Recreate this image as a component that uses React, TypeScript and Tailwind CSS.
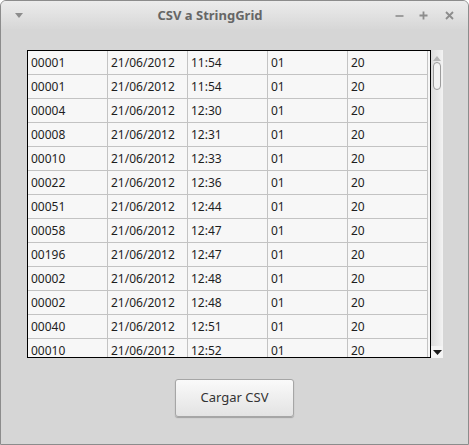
const rows: string[][] = [
  ["00001", "21/06/2012", "11:54", "01", "20"],
  ["00001", "21/06/2012", "11:54", "01", "20"],
  ["00004", "21/06/2012", "12:30", "01", "20"],
  ["00008", "21/06/2012", "12:31", "01", "20"],
  ["00010", "21/06/2012", "12:33", "01", "20"],
  ["00022", "21/06/2012", "12:36", "01", "20"],
  ["00051", "21/06/2012", "12:44", "01", "20"],
  ["00058", "21/06/2012", "12:47", "01", "20"],
  ["00196", "21/06/2012", "12:47", "01", "20"],
  ["00002", "21/06/2012", "12:48", "01", "20"],
  ["00002", "21/06/2012", "12:48", "01", "20"],
  ["00040", "21/06/2012", "12:51", "01", "20"],
  ["00010", "21/06/2012", "12:52", "01", "20"],
];

function TitleBar() {
  return (
    <div className="flex h-[28px] items-center bg-gradient-to-b from-[#ececec] to-[#d7d7d7] rounded-t-[5px]">
      <div className="flex w-[35px] items-center justify-center pl-[1px]">
        <svg width="8" height="5" viewBox="0 0 8 5">
          <path d="M0 0 H8 L4 5 Z" fill="#8c8c8c" />
        </svg>
      </div>
      <div className="flex-1 text-center text-[13px] font-bold text-[#666666] leading-none">
        CSV a StringGrid
      </div>
      <div className="flex w-[84px] items-center pl-[11px]">
        <svg width="9" height="9" viewBox="0 0 9 9">
          <path d="M0.5 5 H8.5" stroke="#8c8c8c" strokeWidth="1.6" />
        </svg>
        <svg className="ml-[15px]" width="9" height="9" viewBox="0 0 9 9">
          <path d="M0.5 4.5 H8.5 M4.5 0.5 V8.5" stroke="#8c8c8c" strokeWidth="1.8" />
        </svg>
        <svg className="ml-[17px]" width="9" height="9" viewBox="0 0 9 9">
          <path d="M1 1 L8 8 M8 1 L1 8" stroke="#8c8c8c" strokeWidth="1.8" />
        </svg>
      </div>
    </div>
  );
}

function Scrollbar() {
  return (
    <div className="flex w-[12px] flex-col bg-gradient-to-r from-[#dcdcdc] to-[#f3f3f3]">
      <div className="flex h-[11px] items-end justify-center">
        <svg width="8" height="5" viewBox="0 0 8 5">
          <path d="M0 5 H8 L4 0 Z" fill="#b4b4b4" />
        </svg>
      </div>
      <div className="mt-[1px] ml-[2px] h-[28px] w-[8px] rounded-full border border-[#9c9c9c] bg-[#f2f2f2]" />
      <div className="flex-1" />
      <div className="flex h-[12px] items-center justify-center bg-[#f4f4f4]">
        <svg width="9" height="5" viewBox="0 0 9 5">
          <path d="M0 0 H9 L4.5 5 Z" fill="#1a1a1a" />
        </svg>
      </div>
    </div>
  );
}

function StringGrid() {
  return (
    <div className="flex h-[308px] ml-[26px]">
      <div className="h-full w-[404px] overflow-hidden border border-black bg-[#f7f7f7]">
        {rows.map((row, i) => (
          <div key={i} className="flex h-[24px]">
            {row.map((cell, j) => (
              <div
                key={j}
                className="flex w-[80px] shrink-0 items-center border-r border-b border-[#c3c3c3] pl-[3px] text-[12px] text-[#1e1e1e]"
              >
                {cell}
              </div>
            ))}
          </div>
        ))}
      </div>
      <Scrollbar />
    </div>
  );
}

export default function App() {
  return (
    <div
      className="h-[445px] w-[469px] rounded-t-[6px] border border-[#8c8c8c] bg-[#d6d6d6]"
      style={{ fontFamily: '"Noto Sans", "Open Sans", sans-serif' }}
    >
      <TitleBar />
      <div className="pt-[21px]">
        <StringGrid />
        <div className="mt-[21px] flex justify-center">
          <button className="h-[38px] w-[119px] rounded-[3px] border border-[#a6a6a6] bg-gradient-to-b from-[#fafafa] to-[#e3e3e3] text-[13px] text-[#333333] shadow-[0_1px_1px_rgba(0,0,0,0.25)]">
            Cargar CSV
          </button>
        </div>
      </div>
    </div>
  );
}
